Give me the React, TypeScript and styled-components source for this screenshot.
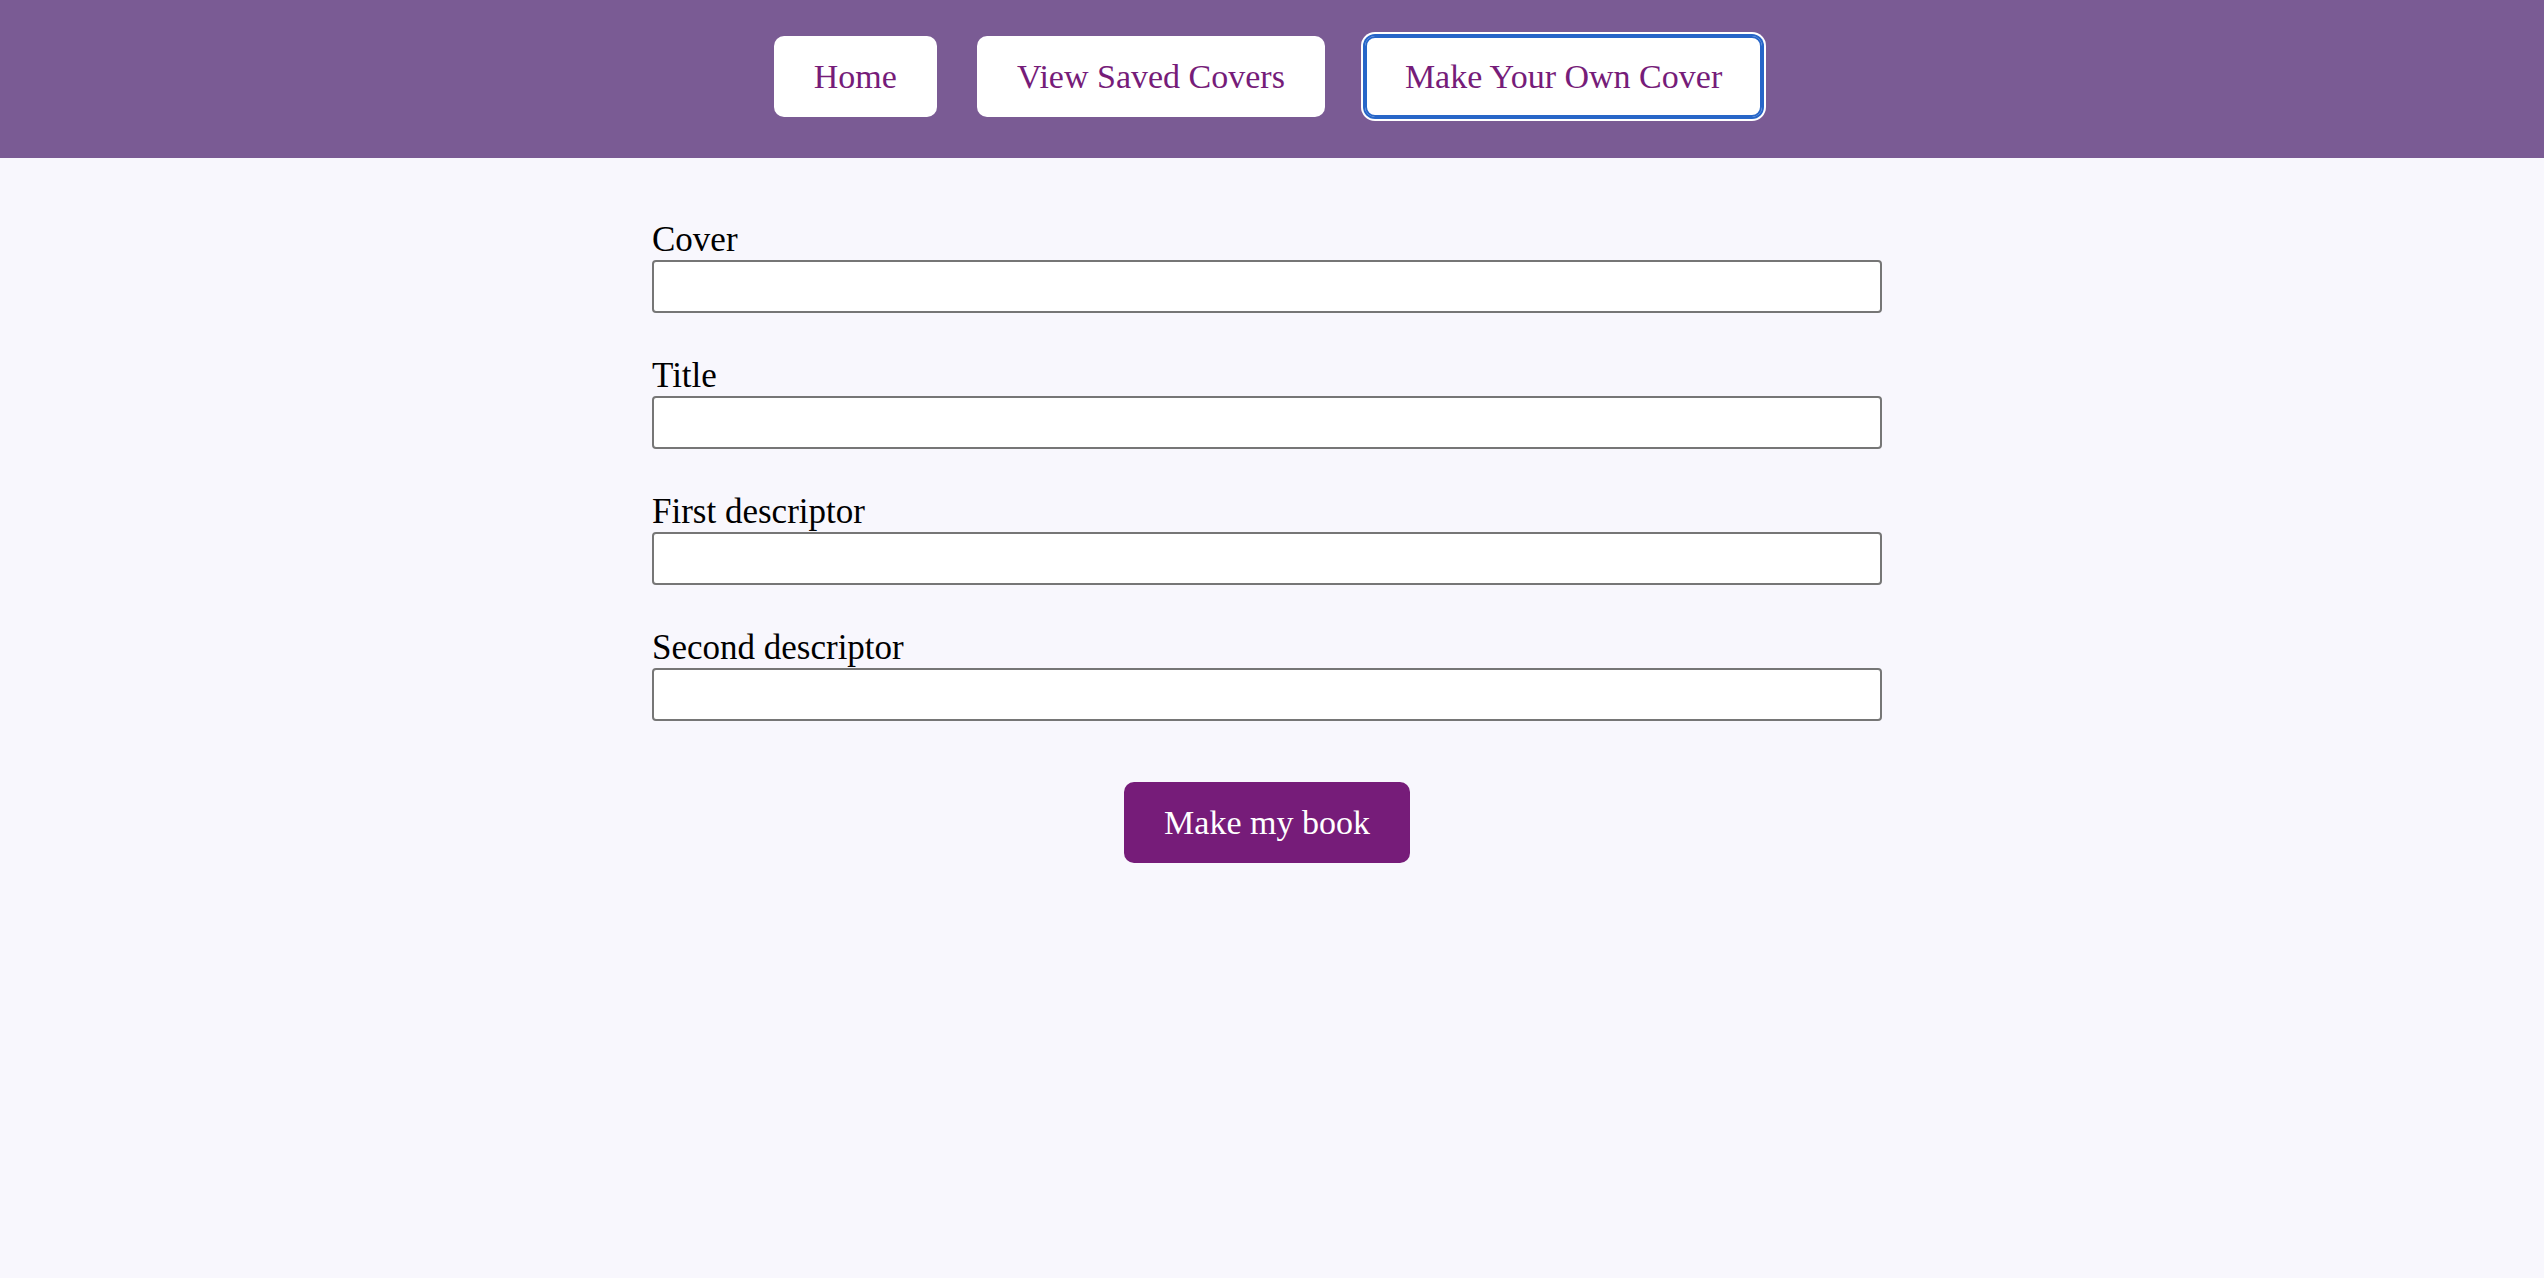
import React from 'react';
import styled, { createGlobalStyle, css } from 'styled-components';

const NAV_ITEMS = [
  { label: 'Home', active: false },
  { label: 'View Saved Covers', active: false },
  { label: 'Make Your Own Cover', active: true },
];

const FIELDS = ['Cover', 'Title', 'First descriptor', 'Second descriptor'];

const App = () => {
  return (
    <>
      <GlobalStyle />
      <Header>
        {NAV_ITEMS.map((item) => (
          <NavButton key={item.label} type="button" $active={item.active}>
            {item.label}
          </NavButton>
        ))}
      </Header>
      <Main>
        <Form onSubmit={(e) => e.preventDefault()}>
          <FieldList>
            {FIELDS.map((name) => (
              <Field key={name}>
                <Label htmlFor={name}>{name}</Label>
                <Input id={name} type="text" />
              </Field>
            ))}
          </FieldList>
          <SubmitRow>
            <SubmitButton type="submit">Make my book</SubmitButton>
          </SubmitRow>
        </Form>
      </Main>
    </>
  );
};

const FONT = `"Liberation Serif", "Times New Roman", serif`;
const PURPLE = '#761c79';

const GlobalStyle = createGlobalStyle`
  body {
    margin: 0;
    background: #f8f7fd;
    font-family: ${FONT};
  }
`;

const Header = styled.header`
  display: flex;
  justify-content: center;
  align-items: center;
  gap: 40px;
  padding: 36px 8px 41px 0;
  background: #7a5b94;
`;

const NavButton = styled.button<{ $active?: boolean }>`
  height: 81px;
  padding: 0 40px;
  border: none;
  border-radius: 10px;
  background: #fff;
  color: ${PURPLE};
  font-family: ${FONT};
  font-size: 34px;
  cursor: pointer;

  ${({ $active }) =>
    $active &&
    css`
      box-shadow: inset 0 0 0 2px #2766c8, 0 0 0 2px #2766c8, 0 0 0 4px #fff;
    `}
`;

const Main = styled.main`
  padding: 62px 10px 0 0;
`;

const Form = styled.form`
  width: 1230px;
  margin: 0 auto;
`;

const FieldList = styled.div`
  display: flex;
  flex-direction: column;
  gap: 43px;
`;

const Field = styled.div`
  display: flex;
  flex-direction: column;
`;

const Label = styled.label`
  font-size: 35px;
  line-height: 40px;
  color: #000;
`;

const Input = styled.input`
  box-sizing: border-box;
  height: 53px;
  width: 100%;
  border: 2px solid #767676;
  border-radius: 4px;
  background: #fff;
  font-family: ${FONT};
  font-size: 28px;
`;

const SubmitRow = styled.div`
  display: flex;
  justify-content: center;
  margin-top: 61px;
`;

const SubmitButton = styled.button`
  height: 81px;
  padding: 0 40px;
  border: none;
  border-radius: 10px;
  background: ${PURPLE};
  color: #fff;
  font-family: ${FONT};
  font-size: 34px;
  cursor: pointer;
`;

export default App;
